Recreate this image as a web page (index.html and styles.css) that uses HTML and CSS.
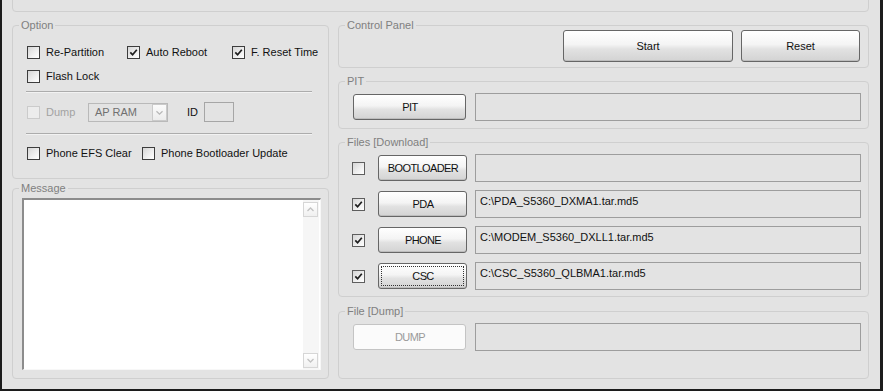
FILE: index.html
```html
<!DOCTYPE html>
<html>
<head>
<meta charset="utf-8">
<title>Odin</title>
<link rel="stylesheet" href="styles.css">
</head>
<body>
<div class="window">
  <div class="top-group"></div>
  <div class="main">
    <div class="col-left">
      <fieldset class="group option">
        <legend>Option</legend>
        <div class="body">
          <div class="row">
            <label class="chk w100"><span class="box"></span>Re-Partition</label>
            <label class="chk w105"><span class="box"><svg viewBox="0 0 11 11"><path d="M2.3 5.3 L4.6 7.8 L8.8 2.8" /></svg></span>Auto Reboot</label>
            <label class="chk"><span class="box"><svg viewBox="0 0 11 11"><path d="M2.3 5.3 L4.6 7.8 L8.8 2.8" /></svg></span>F. Reset Time</label>
          </div>
          <div class="row row-gap">
            <label class="chk"><span class="box"></span>Flash Lock</label>
          </div>
          <div class="sep sep1"></div>
          <div class="row dump-row">
            <label class="chk disabled w61"><span class="box"></span>Dump</label>
            <div class="combo"><span>AP RAM</span><span class="combo-btn"><svg viewBox="0 0 15 17"><path d="M4 7 L7.5 10.5 L11 7" /></svg></span></div>
            <span class="id-label">ID</span>
            <div class="id-box"></div>
          </div>
          <div class="sep sep2"></div>
          <div class="row efs-row">
            <label class="chk w115"><span class="box"></span>Phone EFS Clear</label>
            <label class="chk"><span class="box"></span>Phone Bootloader Update</label>
          </div>
        </div>
      </fieldset>
      <fieldset class="group message">
        <legend>Message</legend>
        <div class="msg-body">
          <div class="msg">
            <div class="msg-text"></div>
            <div class="scroll">
              <span class="sbtn"><svg viewBox="0 0 13 13"><path d="M3.5 8 L6.5 5 L9.5 8" /></svg></span>
              <span class="sbtn"><svg viewBox="0 0 13 13"><path d="M3.5 5 L6.5 8 L9.5 5" /></svg></span>
            </div>
          </div>
        </div>
      </fieldset>
    </div>
    <div class="col-right">
      <fieldset class="group cp">
        <legend>Control Panel</legend>
        <div class="cp-body">
          <button class="btn start">Start</button>
          <button class="btn reset">Reset</button>
        </div>
      </fieldset>
      <fieldset class="group pit">
        <legend>PIT</legend>
        <div class="body line">
          <button class="btn fbtn caps">PIT</button>
          <div class="field"></div>
        </div>
      </fieldset>
      <fieldset class="group files">
        <legend>Files [Download]</legend>
        <div class="files-body">
          <div class="line">
            <span class="box fbox"></span>
            <button class="btn fbtn2 caps">BOOTLOADER</button>
            <div class="field"></div>
          </div>
          <div class="line">
            <span class="box fbox"><svg viewBox="0 0 11 11"><path d="M2.3 5.3 L4.6 7.8 L8.8 2.8" /></svg></span>
            <button class="btn fbtn2 caps">PDA</button>
            <div class="field">C:\PDA_S5360_DXMA1.tar.md5</div>
          </div>
          <div class="line">
            <span class="box fbox"><svg viewBox="0 0 11 11"><path d="M2.3 5.3 L4.6 7.8 L8.8 2.8" /></svg></span>
            <button class="btn fbtn2 caps">PHONE</button>
            <div class="field">C:\MODEM_S5360_DXLL1.tar.md5</div>
          </div>
          <div class="line">
            <span class="box fbox"><svg viewBox="0 0 11 11"><path d="M2.3 5.3 L4.6 7.8 L8.8 2.8" /></svg></span>
            <button class="btn fbtn2 caps focus">CSC</button>
            <div class="field">C:\CSC_S5360_QLBMA1.tar.md5</div>
          </div>
        </div>
      </fieldset>
      <fieldset class="group dump">
        <legend>File [Dump]</legend>
        <div class="body line">
          <button class="btn fbtn caps disabled-btn">DUMP</button>
          <div class="field"></div>
        </div>
      </fieldset>
    </div>
  </div>
</div>
</body>
</html>
```

FILE: styles.css
```css
* { box-sizing: border-box; }
html, body { margin: 0; padding: 0; }
body {
  width: 883px;
  height: 391px;
  overflow: hidden;
  background: #e3e3e3;
  font-family: "Liberation Sans", Arial, sans-serif;
  font-size: 11px;
  line-height: 13px;
  color: #111;
}
.window {
  width: 883px;
  height: 391px;
  display: flex;
  flex-direction: column;
  border-left: 2px solid #1c1c1c;
  border-right: 3px solid #1c1c1c;
  border-bottom: 2px solid #1c1c1c;
  padding: 0 11px 0 10px;
  overflow: hidden;
  background: #e3e3e3;
}
.top-group {
  flex: none;
  height: 24px;
  margin-top: -12px;
  border: 1px solid #cfcfcf;
  border-radius: 4px;
}
.main {
  display: flex;
  gap: 9px;
  margin-top: 7px;
}
.col-left {
  width: 317px;
  display: flex;
  flex-direction: column;
  gap: 3px;
}
.col-right {
  width: 531px;
  display: flex;
  flex-direction: column;
}
.group {
  margin: 0;
  padding: 0 7px 0 6px;
  border: 1px solid #cfcfcf;
  border-radius: 4px;
  min-width: 0;
}
.group legend {
  padding: 0 2px;
  color: #808080;
  line-height: 13px;
}
.body { padding-left: 8px; }

/* option */
.option { height: 160px; }
.option .body { padding-top: 12px; }
.row {
  display: flex;
  align-items: center;
  height: 16px;
}
.row-gap { margin-top: 8px; }
.chk {
  display: flex;
  align-items: center;
  white-space: nowrap;
}
.w100 { width: 100px; }
.w105 { width: 105px; }
.w61 { width: 61px; }
.w115 { width: 115px; }
.box {
  flex: none;
  width: 13px;
  height: 13px;
  margin-right: 6px;
  border: 1px solid #3d3d3d;
  background: linear-gradient(135deg, #d6d6d6 0%, #f0f0f0 60%, #ffffff 100%);
  display: flex;
  align-items: center;
  justify-content: center;
}
.box svg { width: 11px; height: 11px; }
.box path, .combo-btn path, .sbtn path {
  fill: none;
  stroke: #1e1e1e;
  stroke-width: 1.7;
}
.disabled { color: #a2a2a2; }
.disabled .box {
  border-color: #cbcbcb;
  background: #ececec;
}
.sep {
  height: 2px;
  border-top: 1px solid #acacac;
  border-bottom: 1px solid #f2f2f2;
  margin-right: 9px;
  margin-left: -1px;
}
.sep1 { margin-top: 7px; }
.sep2 { margin-top: 11px; }
.dump-row { height: 19px; margin-top: 10px; }
.combo {
  width: 80px;
  height: 19px;
  border: 1px solid #b9b9b9;
  display: flex;
  align-items: center;
  justify-content: space-between;
  padding-left: 6px;
  color: #707070;
}
.combo-btn {
  width: 15px;
  height: 17px;
  border: 1px solid #cacaca;
  background: linear-gradient(#fbfbfb, #ececec);
  display: flex;
}
.combo-btn svg { width: 13px; height: 15px; }
.combo-btn path { stroke: #b8b8b8; stroke-width: 1.4; }
.id-label { margin-left: 19px; width: 17px; }
.id-box {
  width: 30px;
  height: 20px;
  margin-top: -2px;
  border: 1px solid #a6a6a6;
}
.efs-row { margin-top: 10px; }

/* message */
.message { height: 197px; }
.msg-body { padding: 3px 0 0 3px; }
.msg {
  height: 172px;
  display: flex;
  background: #fff;
  border-top: 2px solid #8c8c8c;
  border-left: 2px solid #8c8c8c;
  border-right: 1px solid #f7f7f7;
  border-bottom: 1px solid #f7f7f7;
}
.msg-text { flex: 1; }
.scroll {
  width: 16px;
  margin-right: 1px;
  background: #f6f6f6;
  display: flex;
  flex-direction: column;
  justify-content: space-between;
  padding: 2px 0 1px;
}
.sbtn {
  width: 15px;
  height: 15px;
  border: 1px solid #d6d6d6;
  background: linear-gradient(#ffffff, #f0f0f0);
  display: flex;
}
.sbtn svg { width: 13px; height: 13px; }
.sbtn path { stroke: #c2c2c2; stroke-width: 1.3; }

/* buttons */
.btn {
  font: inherit;
  color: #111;
  margin: 0;
  padding: 0;
  height: 26px;
  border: 1px solid #666;
  border-radius: 3px;
  background: linear-gradient(#ffffff 0%, #f4f4f4 45%, #e2e2e2 60%, #d3d3d3 100%);
  box-shadow: inset 0 -1px 0 #bdbdbd;
  display: flex;
  align-items: center;
  justify-content: center;
  flex: none;
}
.caps { letter-spacing: -0.6px; text-indent: 1px; }
.focus { outline: 1px dotted #333; outline-offset: -4px; }
.disabled-btn {
  background: #fbfbfb;
  border-color: #c4c4c4;
  box-shadow: none;
  color: #9a9a9a;
}

/* control panel */
.cp { height: 49px; }
.cp-body {
  display: flex;
  justify-content: flex-end;
  gap: 8px;
  margin-top: -2px;
  padding-right: 1px;
}
.start { width: 170px; height: 32px; }
.reset { width: 119px; height: 32px; }

/* pit / files / dump */
.pit { height: 54px; margin-top: 7px; }
.files { height: 161px; margin-top: 7px; }
.dump { height: 74px; margin-top: 8px; }
.line {
  display: flex;
  align-items: center;
  gap: 9px;
}
.pit .line, .dump .line { padding-top: 5px; }
.fbtn { width: 113px; }
.files-body {
  padding: 5px 0 0 7px;
  display: flex;
  flex-direction: column;
  gap: 8px;
}
.files .line { gap: 8px; }
.fbox { margin-right: 5px; border-color: #5e5e5e; }
.fbtn2 { width: 89px; }
.field {
  flex: 1;
  height: 28px;
  border: 1px solid #9d9d9d;
  padding: 4px 4px;
  white-space: nowrap;
  overflow: hidden;
}
```
